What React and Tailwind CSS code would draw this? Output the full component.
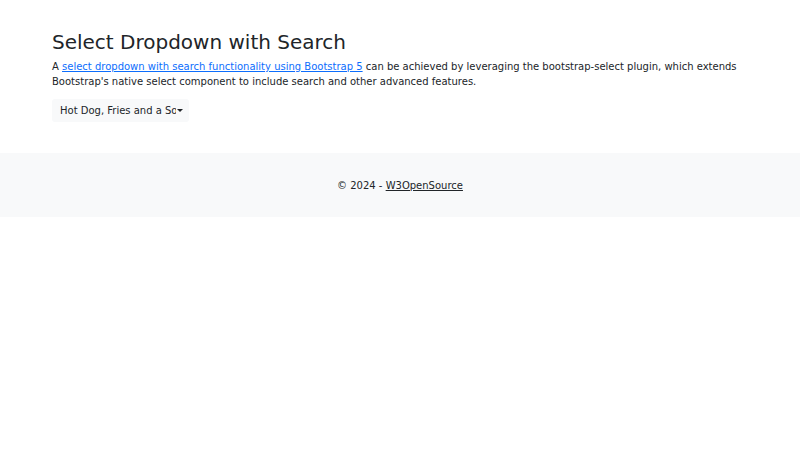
export default function App() {
  return (
    <div className="min-h-screen bg-white text-[#212529] font-['DejaVu_Sans',sans-serif]">
      <div className="w-[720px] mx-auto px-3 pt-[29px] pb-[31px]">
        <h1 className="text-[20px] leading-[26px] mb-[4px]">Select Dropdown with Search</h1>
        <p className="text-[10px] leading-[15px] mb-[10px]">
          A{" "}
          <a href="#" className="text-[#0d6efd] underline">
            select dropdown with search functionality using Bootstrap 5
          </a>{" "}
          can be achieved by leveraging the bootstrap-select plugin, which extends Bootstrap's native select component
          to include search and other advanced features.
        </p>
        <button className="flex items-center w-[137px] h-[23px] pl-[8px] pr-[6px] bg-[#f8f9fa] rounded-[3px] text-[10px] text-[#212529]">
          <span className="flex-1 overflow-hidden whitespace-nowrap text-left">Hot Dog, Fries and a Soda</span>
          <svg width="6" height="3" viewBox="0 0 6 3" className="ml-[1px] shrink-0">
            <path d="M0 0h6L3 3z" fill="#212529" />
          </svg>
        </button>
      </div>
      <footer className="bg-[#f8f9fa] h-[64px] flex items-center justify-center text-[10px]">
        <span>
          © 2024 - <a href="#" className="underline text-[#212529]">W3OpenSource</a>
        </span>
      </footer>
    </div>
  );
}
